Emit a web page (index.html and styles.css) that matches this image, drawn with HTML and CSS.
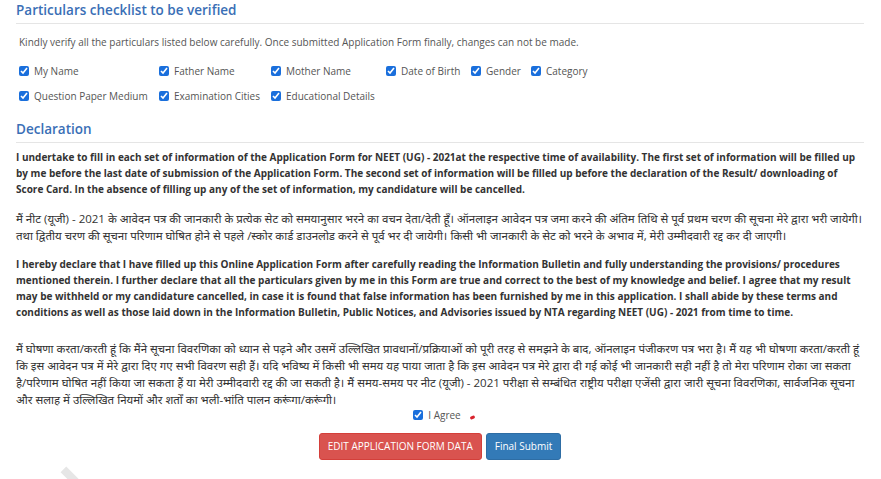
FILE: index.html
```html
<!DOCTYPE html>
<html lang="en">
<head>
<meta charset="utf-8">
<title>Particulars checklist</title>
<link rel="stylesheet" href="styles.css">
</head>
<body>
<div class="page">
  <h3 class="section-title">Particulars checklist to be verified</h3>
  <p class="note">Kindly verify all the particulars listed below carefully. Once submitted Application Form finally, changes can not be made.</p>
  <div class="checklist">
    <label class="chk"><input type="checkbox" checked> My Name</label>
    <label class="chk"><input type="checkbox" checked> Father Name</label>
    <label class="chk"><input type="checkbox" checked> Mother Name</label>
    <label class="chk"><input type="checkbox" checked> Date of Birth</label>
    <label class="chk"><input type="checkbox" checked> Gender</label>
    <label class="chk"><input type="checkbox" checked> Category</label>
    <label class="chk"><input type="checkbox" checked> Question Paper Medium</label>
    <label class="chk"><input type="checkbox" checked> Examination Cities</label>
    <label class="chk"><input type="checkbox" checked> Educational Details</label>
  </div>

  <h3 class="section-title decl-title">Declaration</h3>
  <p class="en">I undertake to fill in each set of information of the Application Form for NEET (UG) - 2021at the respective time of availability. The first set of information will be filled up by me before the last date of submission of the Application Form. The second set of information will be filled up before the declaration of the Result/ downloading of Score Card. In the absence of filling up any of the set of information, my candidature will be cancelled.</p>
  <p class="hi hi-first">मैं नीट (यूजी) - 2021 के आवेदन पत्र की जानकारी के प्रत्येक सेट को समयानुसार भरने का वचन देता/देती हूँ। ऑनलाइन आवेदन पत्र जमा करने की अंतिम तिथि से पूर्व प्रथम चरण की सूचना मेरे द्वारा भरी जायेगी। तथा द्वितीय चरण की सूचना परिणाम घोषित होने से पहले /स्कोर कार्ड डाउनलोड करने से पूर्व भर दी जायेगी। किसी भी जानकारी के सेट को भरने के अभाव में, मेरी उम्मीदवारी रद्द कर दी जाएगी।</p>
  <p class="en en-second">I hereby declare that I have filled up this Online Application Form after carefully reading the Information Bulletin and fully understanding the provisions/ procedures mentioned therein. I further declare that all the particulars given by me in this Form are true and correct to the best of my knowledge and belief. I agree that my result may be withheld or my candidature cancelled, in case it is found that false information has been furnished by me in this application. I shall abide by these terms and conditions as well as those laid down in the Information Bulletin, Public Notices, and Advisories issued by NTA regarding NEET (UG) - 2021 from time to time.</p>
  <p class="hi hi-second">मैं घोषणा करता/करती हूं कि मैंने सूचना विवरणिका को ध्यान से पढ़ने और उसमें उल्लिखित प्रावधानों/प्रक्रियाओं को पूरी तरह से समझने के बाद, ऑनलाइन पंजीकरण पत्र भरा है। मैं यह भी घोषणा करता/करती हूं कि इस आवेदन पत्र में मेरे द्वारा दिए गए सभी विवरण सही हैं। यदि भविष्य में किसी भी समय यह पाया जाता है कि इस आवेदन पत्र मेरे द्वारा दी गई कोई भी जानकारी सही नहीं है तो मेरा परिणाम रोका जा सकता है/परिणाम घोषित नहीं किया जा सकता हैं या मेरी उम्मीदवारी रद्द की जा सकती है। मैं समय-समय पर नीट (यूजी) - 2021 परीक्षा से सम्बंधित राष्ट्रीय परीक्षा एजेंसी द्वारा जारी सूचना विवरणिका, सार्वजनिक सूचना और सलाह में उल्लिखित नियमों और शर्तों का भली-भांति पालन करूंगा/करूंगी।</p>

  <div class="agree-row">
    <label class="chk agree"><input type="checkbox" checked> I Agree</label><span class="req"></span>
  </div>
  <div class="actions">
    <button class="btn btn-danger" type="button">EDIT APPLICATION FORM DATA</button>
    <button class="btn btn-primary" type="button">Final Submit</button>
  </div>
  <div class="ghost-mark"></div>
</div>
</body>
</html>
```
FILE: styles.css
```css
html, body {
  margin: 0;
  padding: 0;
  background: #fff;
}
body {
  font-family: "Open Sans", "Noto Sans", sans-serif;
  color: #333;
  font-size: 10px;
}
.page {
  padding: 0 17px 0 16px;
  position: relative;
  height: 479px;
  overflow: hidden;
}
.section-title {
  margin: 0;
  padding-top: 1px;
  padding-bottom: 4px;
  font-size: 13.5px;
  font-weight: 600;
  color: #3a6fb6;
  border-bottom: 1px solid #e5e5e5;
  line-height: 18px;
}
.note {
  margin: 10px 0 0 3px;
  color: #555;
  line-height: 16px;
}
.checklist {
  display: grid;
  grid-template-columns: 140px 112px 115px 85px 60px auto;
  row-gap: 9px;
  margin: 13px 0 0 3px;
}
.chk {
  display: flex;
  align-items: center;
  gap: 5px;
  color: #555;
  line-height: 16px;
  white-space: nowrap;
}
.chk input {
  margin: 0;
  width: 10px;
  height: 10px;
  accent-color: #1a6fdc;
}
.decl-title {
  margin-top: 15px;
}
.en {
  margin: 6px 0 0 0;
  font-weight: 700;
  line-height: 16px;
  color: #333;
}
.hi {
  line-height: 17px;
  font-size: 11.5px;
  color: #333;
}
.hi-first { margin: 13px 0 0 0; }
.en-second { margin-top: 12px; }
.hi-second { margin: 20px 0 0 0; }
.agree-row {
  display: flex;
  justify-content: center;
  margin-top: -1px;
  padding-left: 8px;
}
.req {
  width: 5px;
  height: 3px;
  background: #d9232d;
  border-radius: 2px;
  margin: 9px 0 0 9px;
  transform: rotate(-25deg);
}
.actions {
  display: flex;
  justify-content: center;
  gap: 4px;
  margin-top: 10px;
}
.btn {
  font-family: "Open Sans", sans-serif;
  font-size: 10px;
  line-height: 15px;
  padding: 5px 8px;
  border-radius: 3px;
  border: 1px solid transparent;
  color: #fff;
}
.btn-danger {
  background: #d9534f;
  border-color: #d43f3a;
}
.btn-primary {
  background: #337ab7;
  border-color: #2e6da4;
}
.ghost-mark {
  position: absolute;
  left: 70px;
  top: 465px;
  width: 8px;
  height: 30px;
  background: #e6e6e6;
  transform: rotate(-45deg);
}
```
